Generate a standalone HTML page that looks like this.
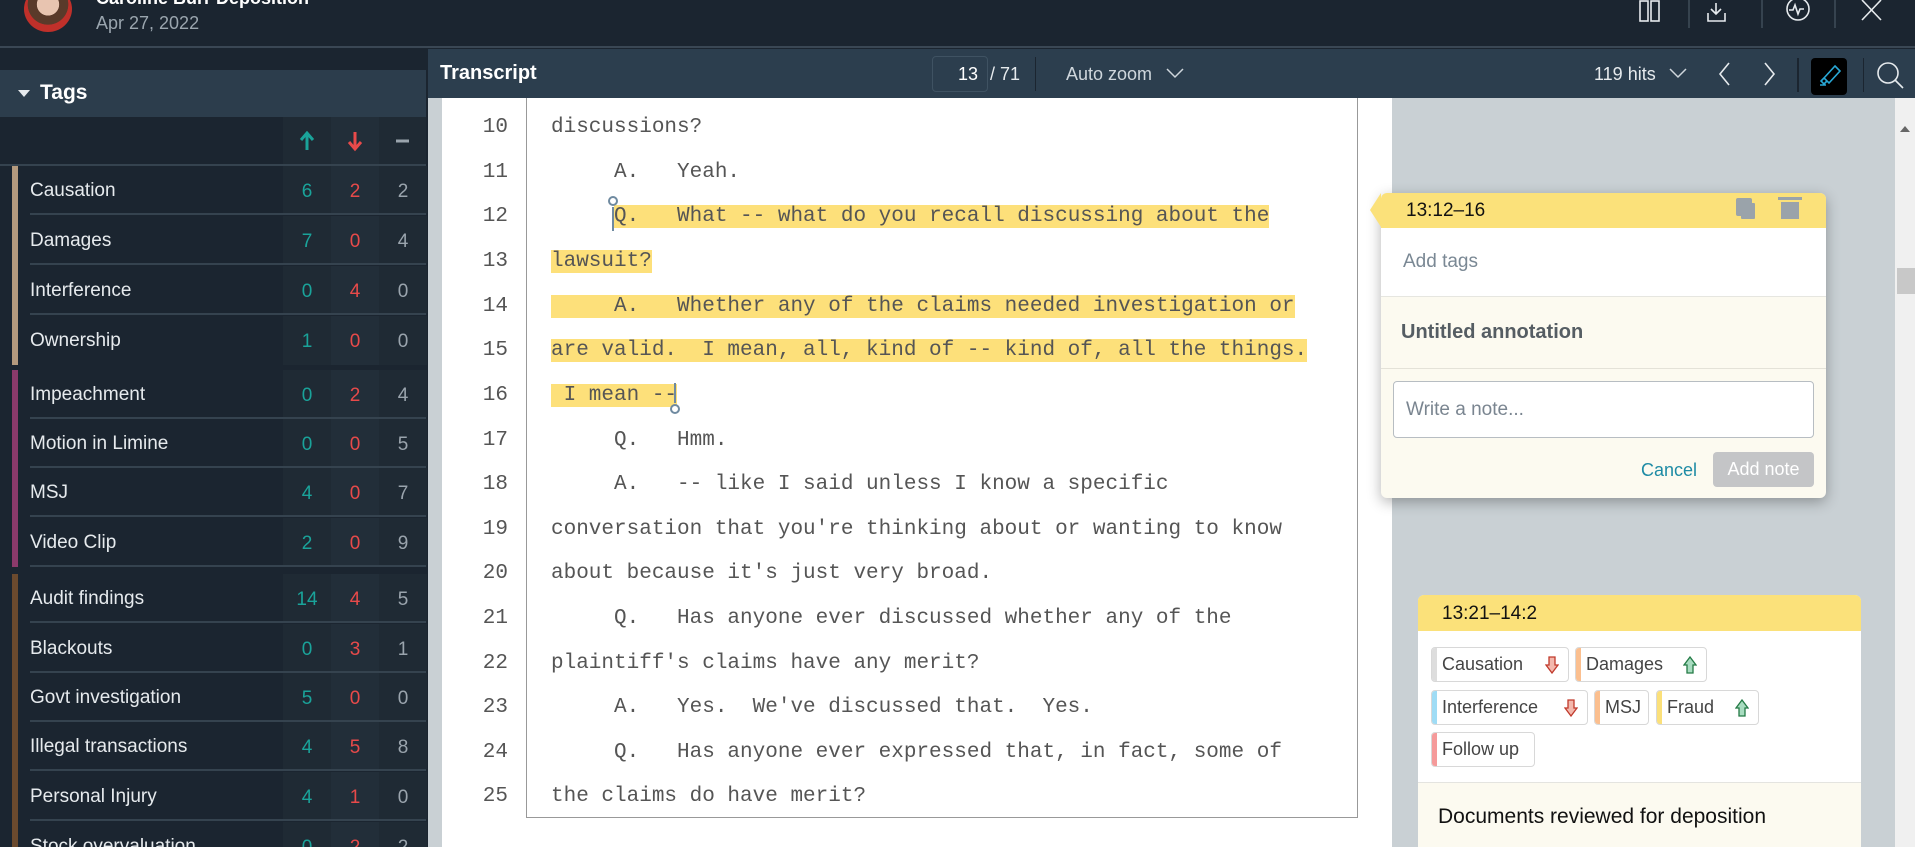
<!DOCTYPE html>
<html><head><meta charset="utf-8"><style>
*{margin:0;padding:0;box-sizing:border-box}
html,body{width:1915px;height:847px;overflow:hidden}
body{background:#1b2530;font-family:"Liberation Sans",sans-serif;position:relative}
.a{position:absolute}
.row{position:absolute;left:0;width:426px;height:49px}
.row .nm{position:absolute;left:30px;top:14px;font-size:19px;color:#e6eaed}
.row .c{position:absolute;top:0;height:49px;width:48px;text-align:center;font-size:19px;line-height:51px}
.row .sep{position:absolute;left:30px;right:0;bottom:0;height:2px;background:#35434f}
.ln{position:absolute;left:442px;width:66px;text-align:right;font-family:"Liberation Mono",monospace;font-size:21px;color:#555}
.tx{position:absolute;left:551px;font-family:"Liberation Mono",monospace;font-size:21px;color:#555;white-space:pre}
.hl{background:#fde07a}
.chip{position:absolute;height:35px;border:1px solid #d8d8d8;border-radius:4px;background:#fff;font-size:18px;color:#444;line-height:33px;padding-left:10px;overflow:hidden}
.chip:before{content:"";position:absolute;left:0;top:0;bottom:0;width:5px;background:var(--c)}
.chip svg{position:absolute;right:9px;top:8px}
</style></head><body>
<!-- header -->
<div class="a" style="left:0;top:0;width:1915px;height:48px;background:#1b2530;border-bottom:2px solid #3a4754"></div>
<div class="a" style="left:24px;top:-14px;width:48px;height:46px;border-radius:50%;background:radial-gradient(circle at 50% 40%,#e8c4b0 0 30%,#5a3a2a 31% 55%,#c0302a 56%)"></div>
<div class="a" style="left:96px;top:-12px;font-size:18px;font-weight:bold;color:#fff">Caroline Burr Deposition</div>
<div class="a" style="left:96px;top:13px;font-size:18px;color:#9aa5ae">Apr 27, 2022</div>
<svg class="a" style="left:1630px;top:0" width="285" height="30" fill="none" stroke="#e6eaed" stroke-width="1.6">
<rect x="10" y="1" width="8" height="20"/><rect x="21" y="1" width="8" height="20"/>
<line x1="59" y1="0" x2="59" y2="28" stroke="#3e4b57"/>
<path d="M86 3v11M81 9l5 5 5-5M78 13v8h17v-8"/>
<line x1="132" y1="0" x2="132" y2="28" stroke="#3e4b57"/>
<circle cx="168" cy="9" r="11"/><path d="M159 10h4l2-5 3 9 2-5h4"/>
<line x1="205" y1="0" x2="205" y2="28" stroke="#3e4b57"/>
<path d="M232 0l19 20M251 0l-19 20"/>
</svg>
<!-- sidebar -->
<div class="a" style="left:0;top:70px;width:426px;height:47px;background:#2c3d4c"></div>
<div class="a" style="left:18px;top:90px;width:0;height:0;border-left:6px solid transparent;border-right:6px solid transparent;border-top:7px solid #e6eaed"></div>
<div class="a" style="left:40px;top:81px;font-size:21px;font-weight:bold;color:#fff">Tags</div>
<div class="a" style="left:283px;top:117px;width:48px;height:48px;background:#1f2a34"></div>
<div class="a" style="left:331px;top:117px;width:48px;height:48px;background:#222e39"></div>
<div class="a" style="left:379px;top:117px;width:47px;height:48px;background:#1f2a34"></div>
<svg class="a" style="left:283px;top:117px" width="143" height="48"><path d="M24 33V17M18 23l6-7 6 7" stroke="#1aa39a" stroke-width="3" fill="none"/><path d="M72 15v16M66 25l6 7 6-7" stroke="#e84a4a" stroke-width="3" fill="none"/><line x1="113" y1="24" x2="126" y2="24" stroke="#9aa4ad" stroke-width="3"/></svg>
<div class="a" style="left:0;top:164px;width:426px;height:2px;background:#35434f"></div>
<div class="a" style="left:12px;top:166px;width:6px;height:199px;background:#b49a7e"></div>
<div class="a" style="left:12px;top:370px;width:6px;height:197px;background:#8b3a6b"></div>
<div class="a" style="left:12px;top:574px;width:6px;height:273px;background:#6b4a2e"></div>
<div class="row" style="top:166px"><div class="nm">Causation</div><div class="c" style="left:283px;background:#1f2a34;color:#1aa39a">6</div><div class="c" style="left:331px;background:#222e39;color:#e84a4a">2</div><div class="c" style="left:379px;background:#1f2a34;color:#9aa4ad">2</div><div class="sep"></div></div>
<div class="row" style="top:216px"><div class="nm">Damages</div><div class="c" style="left:283px;background:#1f2a34;color:#1aa39a">7</div><div class="c" style="left:331px;background:#222e39;color:#e84a4a">0</div><div class="c" style="left:379px;background:#1f2a34;color:#9aa4ad">4</div><div class="sep"></div></div>
<div class="row" style="top:266px"><div class="nm">Interference</div><div class="c" style="left:283px;background:#1f2a34;color:#1aa39a">0</div><div class="c" style="left:331px;background:#222e39;color:#e84a4a">4</div><div class="c" style="left:379px;background:#1f2a34;color:#9aa4ad">0</div><div class="sep"></div></div>
<div class="row" style="top:316px"><div class="nm">Ownership</div><div class="c" style="left:283px;background:#1f2a34;color:#1aa39a">1</div><div class="c" style="left:331px;background:#222e39;color:#e84a4a">0</div><div class="c" style="left:379px;background:#1f2a34;color:#9aa4ad">0</div></div>
<div class="row" style="top:370px"><div class="nm">Impeachment</div><div class="c" style="left:283px;background:#1f2a34;color:#1aa39a">0</div><div class="c" style="left:331px;background:#222e39;color:#e84a4a">2</div><div class="c" style="left:379px;background:#1f2a34;color:#9aa4ad">4</div><div class="sep"></div></div>
<div class="row" style="top:419px"><div class="nm">Motion in Limine</div><div class="c" style="left:283px;background:#1f2a34;color:#1aa39a">0</div><div class="c" style="left:331px;background:#222e39;color:#e84a4a">0</div><div class="c" style="left:379px;background:#1f2a34;color:#9aa4ad">5</div><div class="sep"></div></div>
<div class="row" style="top:468px"><div class="nm">MSJ</div><div class="c" style="left:283px;background:#1f2a34;color:#1aa39a">4</div><div class="c" style="left:331px;background:#222e39;color:#e84a4a">0</div><div class="c" style="left:379px;background:#1f2a34;color:#9aa4ad">7</div><div class="sep"></div></div>
<div class="row" style="top:518px"><div class="nm">Video Clip</div><div class="c" style="left:283px;background:#1f2a34;color:#1aa39a">2</div><div class="c" style="left:331px;background:#222e39;color:#e84a4a">0</div><div class="c" style="left:379px;background:#1f2a34;color:#9aa4ad">9</div><div class="sep"></div></div>
<div class="row" style="top:574px"><div class="nm">Audit findings</div><div class="c" style="left:283px;background:#1f2a34;color:#1aa39a">14</div><div class="c" style="left:331px;background:#222e39;color:#e84a4a">4</div><div class="c" style="left:379px;background:#1f2a34;color:#9aa4ad">5</div><div class="sep"></div></div>
<div class="row" style="top:624px"><div class="nm">Blackouts</div><div class="c" style="left:283px;background:#1f2a34;color:#1aa39a">0</div><div class="c" style="left:331px;background:#222e39;color:#e84a4a">3</div><div class="c" style="left:379px;background:#1f2a34;color:#9aa4ad">1</div><div class="sep"></div></div>
<div class="row" style="top:673px"><div class="nm">Govt investigation</div><div class="c" style="left:283px;background:#1f2a34;color:#1aa39a">5</div><div class="c" style="left:331px;background:#222e39;color:#e84a4a">0</div><div class="c" style="left:379px;background:#1f2a34;color:#9aa4ad">0</div><div class="sep"></div></div>
<div class="row" style="top:722px"><div class="nm">Illegal transactions</div><div class="c" style="left:283px;background:#1f2a34;color:#1aa39a">4</div><div class="c" style="left:331px;background:#222e39;color:#e84a4a">5</div><div class="c" style="left:379px;background:#1f2a34;color:#9aa4ad">8</div><div class="sep"></div></div>
<div class="row" style="top:772px"><div class="nm">Personal Injury</div><div class="c" style="left:283px;background:#1f2a34;color:#1aa39a">4</div><div class="c" style="left:331px;background:#222e39;color:#e84a4a">1</div><div class="c" style="left:379px;background:#1f2a34;color:#9aa4ad">0</div><div class="sep"></div></div>
<div class="row" style="top:822px"><div class="nm">Stock overvaluation</div><div class="c" style="left:283px;background:#1f2a34;color:#1aa39a">0</div><div class="c" style="left:331px;background:#222e39;color:#e84a4a">2</div><div class="c" style="left:379px;background:#1f2a34;color:#9aa4ad">2</div></div>
<!-- toolbar -->
<div class="a" style="left:428px;top:49px;width:1487px;height:49px;background:#2c3e4e"></div>
<div class="a" style="left:440px;top:62px;font-size:20px;font-weight:bold;color:#fff">Transcript</div>
<div class="a" style="left:932px;top:56px;width:56px;height:36px;border:1px solid #3f5262;border-radius:4px"></div>
<div class="a" style="left:958px;top:64px;font-size:18px;color:#fff">13</div>
<div class="a" style="left:990px;top:64px;font-size:18px;color:#e6eaed">/ 71</div>
<div class="a" style="left:1035px;top:57px;width:1px;height:34px;background:#1b2530"></div>
<div class="a" style="left:1066px;top:64px;font-size:18px;color:#cfd6dc">Auto zoom</div>
<svg class="a" style="left:1165px;top:67px" width="20" height="12"><path d="M2 2l8 8 8-8" stroke="#cfd6dc" stroke-width="1.5" fill="none"/></svg>
<div class="a" style="left:1594px;top:64px;font-size:18px;color:#e6eaed">119 hits</div>
<svg class="a" style="left:1668px;top:67px" width="20" height="12"><path d="M2 2l8 8 8-8" stroke="#cfd6dc" stroke-width="1.5" fill="none"/></svg>
<svg class="a" style="left:1715px;top:60px" width="70" height="30" fill="none" stroke="#e6eaed" stroke-width="1.6"><path d="M14 3L5 14l9 11"/><path d="M50 3l9 11-9 11"/></svg>
<div class="a" style="left:1797px;top:58px;width:2px;height:34px;background:#1b2530"></div>
<div class="a" style="left:1811px;top:58px;width:36px;height:37px;background:#000;border-radius:4px"></div>
<svg class="a" style="left:1811px;top:58px" width="36" height="37" fill="none" stroke="#29a8d6" stroke-width="1.6"><path d="M24 8l5 5-11 12-5-5zM13 20l-3 3 3 3 3-3M9 27h6"/></svg>
<div class="a" style="left:1863px;top:58px;width:1px;height:34px;background:#1b2530"></div>
<svg class="a" style="left:1875px;top:60px" width="32" height="32" fill="none" stroke="#e6eaed" stroke-width="1.6"><circle cx="13" cy="13" r="10"/><path d="M20 20l8 8"/></svg>
<!-- document -->
<div class="a" style="left:428px;top:98px;width:1467px;height:749px;background:#c9d0d4"></div>
<div class="a" style="left:442px;top:98px;width:950px;height:749px;background:#fff"></div>
<div class="a" style="left:526px;top:98px;width:832px;height:720px;border:1px solid #999;border-top:none"></div>
<div class="a" style="left:1895px;top:98px;width:20px;height:749px;background:#f0f0f0"></div>
<div class="a" style="left:1900px;top:126px;border-left:5px solid transparent;border-right:5px solid transparent;border-bottom:6px solid #666"></div>
<div class="a" style="left:1897px;top:268px;width:18px;height:26px;background:#c8c8c8"></div>

<div class="ln" style="top:116px">10</div><div class="tx" style="top:116px">discussions?</div>
<div class="ln" style="top:161px">11</div><div class="tx" style="top:161px">     A.   Yeah.</div>
<div class="ln" style="top:205px">12</div><div class="tx" style="top:205px">     <span class="hl">Q.   What -- what do you recall discussing about the</span></div>
<div class="ln" style="top:250px">13</div><div class="tx" style="top:250px"><span class="hl">lawsuit?</span></div>
<div class="ln" style="top:295px">14</div><div class="tx" style="top:295px"><span class="hl">     A.   Whether any of the claims needed investigation or</span></div>
<div class="ln" style="top:339px">15</div><div class="tx" style="top:339px"><span class="hl">are valid.  I mean, all, kind of -- kind of, all the things.</span></div>
<div class="ln" style="top:384px">16</div><div class="tx" style="top:384px"><span class="hl"> I mean --</span></div>
<div class="ln" style="top:429px">17</div><div class="tx" style="top:429px">     Q.   Hmm.</div>
<div class="ln" style="top:473px">18</div><div class="tx" style="top:473px">     A.   -- like I said unless I know a specific</div>
<div class="ln" style="top:518px">19</div><div class="tx" style="top:518px">conversation that you're thinking about or wanting to know</div>
<div class="ln" style="top:562px">20</div><div class="tx" style="top:562px">about because it's just very broad.</div>
<div class="ln" style="top:607px">21</div><div class="tx" style="top:607px">     Q.   Has anyone ever discussed whether any of the</div>
<div class="ln" style="top:652px">22</div><div class="tx" style="top:652px">plaintiff's claims have any merit?</div>
<div class="ln" style="top:696px">23</div><div class="tx" style="top:696px">     A.   Yes.  We've discussed that.  Yes.</div>
<div class="ln" style="top:741px">24</div><div class="tx" style="top:741px">     Q.   Has anyone ever expressed that, in fact, some of</div>
<div class="ln" style="top:785px">25</div><div class="tx" style="top:785px">the claims do have merit?</div>
<svg class="a" style="left:605px;top:195px" width="80" height="222" fill="#fff" stroke="#6f8aa0" stroke-width="2"><line x1="8" y1="12" x2="8" y2="36"/><circle cx="8" cy="6" r="4"/><line x1="70" y1="188" x2="70" y2="208"/><circle cx="70" cy="214" r="4"/></svg>
<!-- popup -->
<div class="a" style="left:1381px;top:193px;width:445px;height:305px;background:#fcfaf0;border-radius:6px;box-shadow:0 4px 14px rgba(0,0,0,.3);overflow:hidden">
 <div class="a" style="left:0;top:0;width:445px;height:35px;background:#fbe17a"></div>
 <div class="a" style="left:25px;top:7px;font-size:19px;color:#111">13:12–16</div>
 <div class="a" style="left:355px;top:5px;width:16px;height:18px;background:#9aa3aa;border-radius:2px;box-shadow:4px 4px 0 -1px #9aa3aa"></div>
 <div class="a" style="left:400px;top:9px;width:18px;height:17px;background:#9aa3aa"></div>
 <div class="a" style="left:397px;top:4px;width:24px;height:3px;background:#9aa3aa"></div>
 <div class="a" style="left:0;top:35px;width:445px;height:69px;background:#fff;border-bottom:1px solid #e6e6e0"></div>
 <div class="a" style="left:22px;top:58px;font-size:19px;color:#7a8894">Add tags</div>
 <div class="a" style="left:20px;top:128px;font-size:20px;font-weight:bold;color:#555d63">Untitled annotation</div>
 <div class="a" style="left:0;top:175px;width:445px;height:1px;background:#e4e2d8"></div>
 <div class="a" style="left:12px;top:188px;width:421px;height:57px;background:#fff;border:1px solid #b7bdc2;border-radius:4px"></div>
 <div class="a" style="left:25px;top:206px;font-size:19px;color:#7a8590">Write a note...</div>
 <div class="a" style="left:260px;top:267px;font-size:18px;color:#1e8ba5">Cancel</div>
 <div class="a" style="left:332px;top:259px;width:101px;height:35px;background:#c4c5c7;border-radius:4px;color:#fff;font-size:18px;text-align:center;line-height:35px">Add note</div>
</div>
<div class="a" style="left:1370px;top:193px;width:0;height:0;border-top:17px solid transparent;border-bottom:17px solid transparent;border-right:11px solid #fbe17a"></div>
<!-- second card -->
<div class="a" style="left:1418px;top:595px;width:443px;height:260px;background:#fcfaf0;border-radius:6px;overflow:hidden">
 <div class="a" style="left:0;top:0;width:443px;height:36px;background:#fbe17a"></div>
 <div class="a" style="left:24px;top:8px;font-size:19px;color:#111">13:21–14:2</div>
 <div class="a" style="left:0;top:36px;width:443px;height:152px;background:#fff;border-bottom:1px solid #e4e4e0"></div>
 <div class="a" style="left:20px;top:210px;font-size:21px;color:#111">Documents reviewed for deposition</div>
</div>
<div class="chip" style="--c:#ddd;left:1431px;top:647px;width:138px">Causation<svg width="14" height="18"><path d="M4 1h6v8h3l-6 8-6-8h3z" fill="#f3b8ad" stroke="#c0392b" stroke-width="1.3"/></svg></div>
<div class="chip" style="--c:#fbbf8f;left:1575px;top:647px;width:132px">Damages<svg width="14" height="18"><path d="M4 17h6V9h3L7 1 1 9h3z" fill="#a8dcc0" stroke="#237a45" stroke-width="1.3"/></svg></div>
<div class="chip" style="--c:#9fdcf5;left:1431px;top:690px;width:157px">Interference<svg width="14" height="18"><path d="M4 1h6v8h3l-6 8-6-8h3z" fill="#f3b8ad" stroke="#c0392b" stroke-width="1.3"/></svg></div>
<div class="chip" style="--c:#fbbf8f;left:1594px;top:690px;width:55px">MSJ</div>
<div class="chip" style="--c:#fbe07a;left:1656px;top:690px;width:103px">Fraud<svg width="14" height="18"><path d="M4 17h6V9h3L7 1 1 9h3z" fill="#a8dcc0" stroke="#237a45" stroke-width="1.3"/></svg></div>
<div class="chip" style="--c:#f59a9a;left:1431px;top:732px;width:104px">Follow up</div>
</body></html>
